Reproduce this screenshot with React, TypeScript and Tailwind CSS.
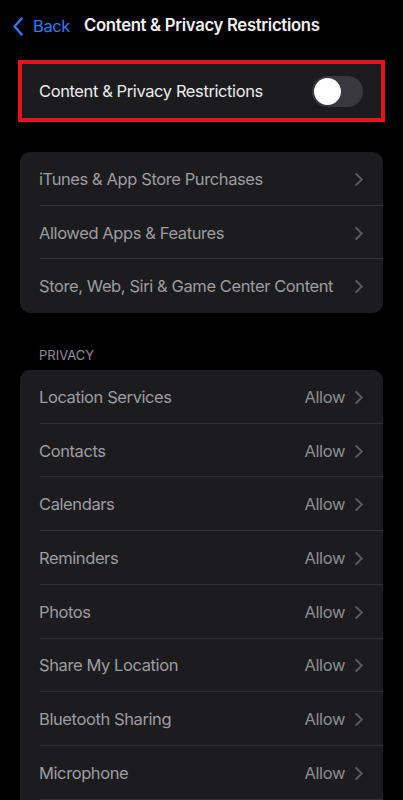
import React from "react";

const Chevron = () => (
  <svg width="8" height="13" viewBox="0 0 8 13" fill="none" className="shrink-0">
    <polyline points="1.2,1 6.8,6.5 1.2,12" stroke="#5b5b5f" strokeWidth="1.9" strokeLinecap="round" strokeLinejoin="round" />
  </svg>
);

const Row = ({ label, value, last }: { label: string; value?: string; last?: boolean }) => (
  <div className="relative flex h-[53.7px] items-center pl-[19px] pr-[20px] pt-[1px]">
    <span className="flex-1 whitespace-nowrap text-[16.5px] tracking-[-0.4px] text-[#9d9da1]">{label}</span>
    {value && <span className="mr-[10px] text-[16.5px] tracking-[-0.4px] text-[#8e8e92]">{value}</span>}
    <Chevron />
    {!last && <div className="absolute bottom-0 left-[20px] right-0 h-px bg-[#313133]" />}
  </div>
);

export default function App() {
  const group1 = [
    "iTunes & App Store Purchases",
    "Allowed Apps & Features",
    "Store, Web, Siri & Game Center Content",
  ];
  const privacy = [
    "Location Services",
    "Contacts",
    "Calendars",
    "Reminders",
    "Photos",
    "Share My Location",
    "Bluetooth Sharing",
    "Microphone",
  ];
  return (
    <div
      className="h-[800px] w-full overflow-hidden bg-black"
      style={{ fontFamily: "Inter, 'Noto Sans', sans-serif" }}
    >
      <div className="flex h-[52px] items-center">
        <div className="ml-[13px] flex items-center">
          <svg width="10" height="19" viewBox="0 0 10 19" fill="none">
            <polyline points="8.6,1.5 1.6,9.5 8.6,17.5" stroke="#3478f6" strokeWidth="2.4" strokeLinecap="round" strokeLinejoin="round" />
          </svg>
          <span className="ml-[10px] text-[16.5px] tracking-[-0.4px] text-[#3478f6]">Back</span>
        </div>
        <span className="ml-[14px] text-[16.7px] font-semibold tracking-[-0.3px] text-[#f2f2f4]">Content &amp; Privacy Restrictions</span>
      </div>

      <div className="mx-[18px] mt-[8px] border-4 border-[#e3141b] bg-[#1c1c1e]">
        <div className="flex h-[54px] items-center pl-[17px] pr-[18px]">
          <span className="flex-1 text-[16.5px] tracking-[-0.4px] text-[#ececee]">Content &amp; Privacy Restrictions</span>
          <div className="flex h-[31px] w-[51px] items-center rounded-full bg-[#39393d] px-[2px]">
            <div className="h-[27px] w-[27px] rounded-full bg-white" />
          </div>
        </div>
      </div>

      <div className="mx-[20px] mt-[30px] overflow-hidden rounded-[10px] bg-[#1c1c1e]">
        {group1.map((l, i) => (
          <Row key={l} label={l} last={i === group1.length - 1} />
        ))}
      </div>

      <div className="ml-[39px] mt-[34px] h-[16px] text-[13px] leading-[16px] text-[#8c8c91]">PRIVACY</div>

      <div className="mx-[20px] mt-[7px] overflow-hidden rounded-[10px] bg-[#1c1c1e]">
        {privacy.map((l) => (
          <Row key={l} label={l} value="Allow" />
        ))}
        <div className="h-[40px]" />
      </div>
    </div>
  );
}
